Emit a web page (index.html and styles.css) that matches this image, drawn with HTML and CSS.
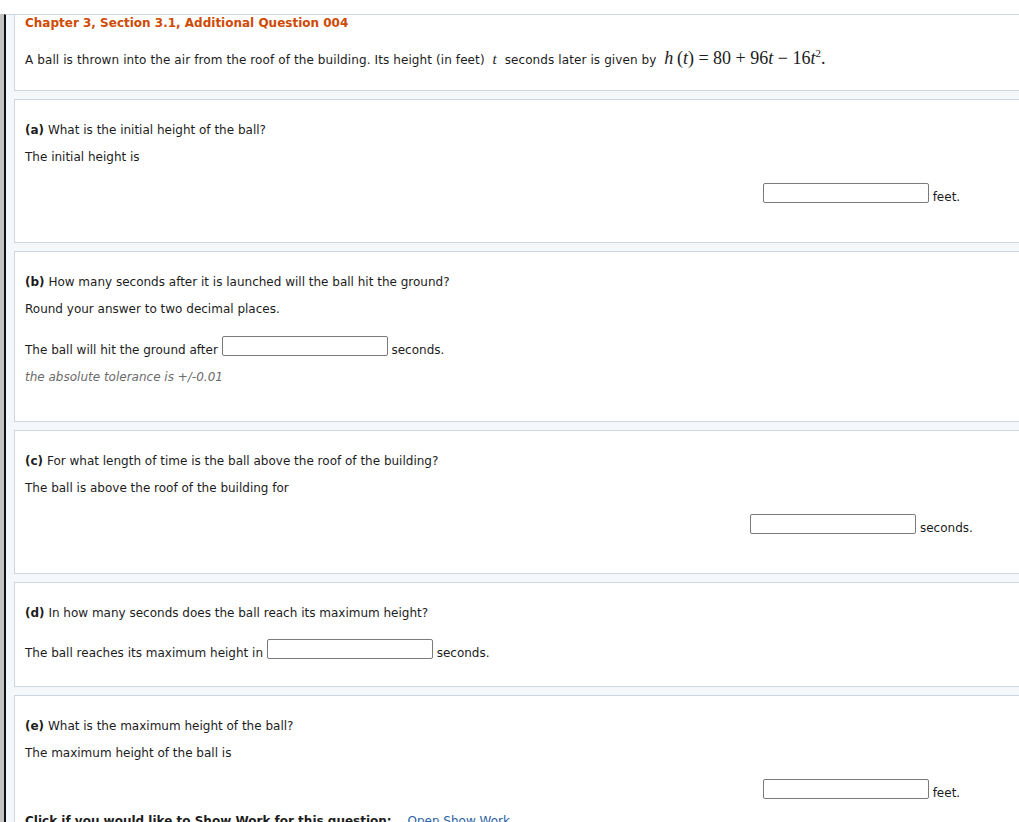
FILE: index.html
```html
<!DOCTYPE html>
<html lang="en">
<head>
    <meta charset="UTF-8">
    <meta name="viewport" content="width=device-width, initial-scale=1.0">
    <title>Chapter 3, Section 3.1, Additional Question 004</title>
    <link rel="stylesheet" href="styles.css">
</head>
<body>
    <div class="frame">
        <div class="page">
            <div class="box header">
                <div class="title">Chapter 3, Section 3.1, Additional Question 004</div>
                <p class="intro">A ball is thrown into the air from the roof of the building. Its height (in feet) &nbsp;<i class="var">t</i>&nbsp; seconds later is given by &nbsp;<span class="math"><i>h</i>&thinsp;(<i>t</i>) = 80 + 96<i>t</i> &minus; 16<i>t</i><sup>2</sup>.</span></p>
            </div>

            <div class="box part">
                <p class="q"><b>(a)</b> What is the initial height of the ball?</p>
                <p class="txt">The initial height is</p>
                <div class="answer-grid">
                    <div></div>
                    <div class="answer-cell"><input type="text"> feet.</div>
                </div>
            </div>

            <div class="box part part-b">
                <p class="q"><b>(b)</b> How many seconds after it is launched will the ball hit the ground?</p>
                <p class="txt">Round your answer to two decimal places.</p>
                <p class="row">The ball will hit the ground after <input type="text"> seconds.</p>
                <p class="tol">the absolute tolerance is +/-0.01</p>
            </div>

            <div class="box part">
                <p class="q"><b>(c)</b> For what length of time is the ball above the roof of the building?</p>
                <p class="txt">The ball is above the roof of the building for</p>
                <div class="answer-grid">
                    <div></div>
                    <div class="answer-cell"><input type="text"> seconds.</div>
                </div>
            </div>

            <div class="box part part-d">
                <p class="q"><b>(d)</b> In how many seconds does the ball reach its maximum height?</p>
                <p class="row">The ball reaches its maximum height in <input type="text"> seconds.</p>
            </div>

            <div class="box part part-e">
                <p class="q"><b>(e)</b> What is the maximum height of the ball?</p>
                <p class="txt">The maximum height of the ball is</p>
                <div class="answer-grid">
                    <div></div>
                    <div class="answer-cell"><input type="text"> feet.</div>
                </div>
                <p class="showwork"><b>Click if you would like to Show Work for this question:</b> <a href="#" class="open-link">Open Show Work</a></p>
            </div>
        </div>
    </div>
</body>
</html>
```

FILE: styles.css
```css
html, body {
    margin: 0;
    padding: 0;
    background-color: #fff;
    overflow: hidden;
}
body {
    font-family: "DejaVu Sans", Verdana, sans-serif;
    font-size: 12px;
    color: #1c1c1c;
    padding-top: 14px;
}
.frame {
    border-left: 4px solid #c3c3c3;
    min-height: 900px;
}
.page {
    border-left: 2px solid #111;
    border-top: 1px solid #cdd5e0;
    background-color: #f5f8fb;
    padding-left: 8px;
    min-height: 900px;
}
.box {
    background-color: #fff;
    border: 1px solid #cdd5e0;
    border-right: none;
    padding: 0 0 0 10px;
    margin-bottom: 8px;
}
.header {
    border-top: none;
    height: 75px;
    padding-top: 0;
}
.title {
    color: #cf4a03;
    font-weight: bold;
    font-size: 12px;
    line-height: 16px;
}
.intro {
    margin: 19px 0 0;
    line-height: 16px;
    letter-spacing: 0.1px;
}
.var {
    font-family: "Liberation Serif", serif;
    font-size: 15px;
}
.math {
    font-family: "Liberation Serif", serif;
    font-size: 18px;
    letter-spacing: 0;
}
.math sup {
    font-size: 11px;
    line-height: 0;
}
p {
    margin: 0;
    line-height: 16px;
}
.part {
    padding-top: 22px;
}
.q {
    margin-bottom: 11px;
}
.answer-grid {
    display: grid;
    grid-template-columns: 1fr 315px;
    margin-top: 18px;
    padding-bottom: 35px;
}
.answer-cell {
    text-align: center;
    line-height: 20px;
}
input {
    box-sizing: border-box;
    width: 166px;
    height: 20px;
    border: 1px solid #7a7a7a;
    border-radius: 2px;
    padding: 1px 3px;
    margin: 0;
    font-family: inherit;
    font-size: 12px;
    vertical-align: 4px;
}
.row {
    margin-top: 19px;
    line-height: 20px;
}
.part-b .tol {
    margin-top: 9px;
    padding-bottom: 36px;
}
.tol {
    font-style: italic;
    color: #6b6b6b;
}
.part-d .q {
    margin-bottom: 0;
}
.part-d .row {
    margin-top: 18px;
    padding-bottom: 23px;
}
.part-e .answer-grid {
    padding-bottom: 0;
}
.showwork {
    margin-top: 10px;
}
.open-link {
    color: #2a63a3;
    text-decoration: none;
    font-weight: normal;
    margin-left: 12px;
}
```
